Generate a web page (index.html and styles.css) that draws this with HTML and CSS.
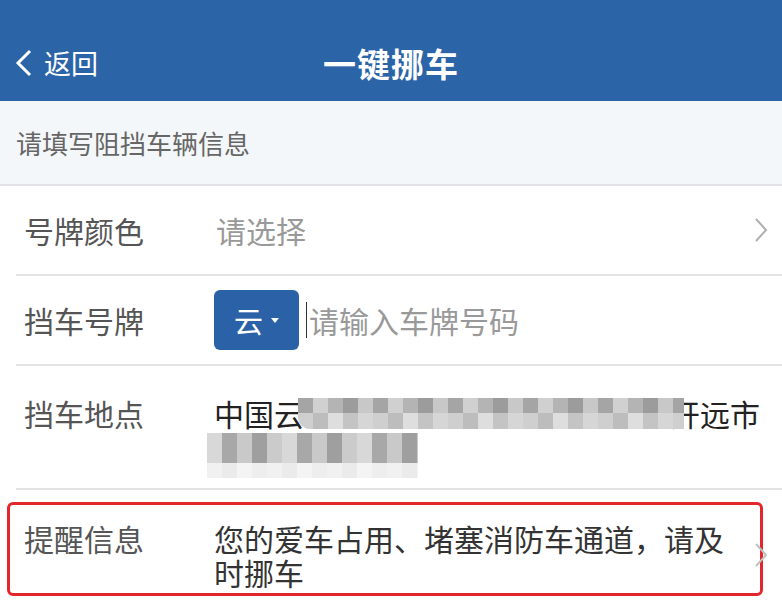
FILE: index.html
```html
<!DOCTYPE html>
<html lang="zh-CN">
<head>
	<meta charset="UTF-8">
	<meta name="viewport" content="width=device-width,initial-scale=1.0">
	<title>一键挪车</title>
	<link rel="stylesheet" href="styles.css">
</head>
<body>
	<!-- 顶部导航 -->
	<div class="header">
		<a class="back" href="##">
			<svg width="20" height="28" viewBox="0 0 20 28"><path d="M16 2 L4 14 L16 26" fill="none" stroke="#fff" stroke-width="3"/></svg>
			<span>返回</span>
		</a>
		<div class="title">一键挪车</div>
		<div class="side"></div>
	</div>
	<!-- 提示 -->
	<div class="tip">请填写阻挡车辆信息</div>
	<!-- 表单 -->
	<div class="list">
		<div class="row">
			<div class="label">号牌颜色</div>
			<div class="value muted">请选择</div>
			<svg class="more" width="14" height="26" viewBox="0 0 14 26"><path d="M2 2 L12 13 L2 24" fill="none" stroke="#b0b0b0" stroke-width="2"/></svg>
		</div>
		<div class="row">
			<div class="label">挡车号牌</div>
			<div class="value plate">
				<span class="prov">云<i class="tri"></i></span>
				<span class="cursor"></span>
				<span class="muted">请输入车牌号码</span>
			</div>
		</div>
		<div class="row top">
			<div class="label">挡车地点</div>
			<div class="value addr">
				<div class="line">中国云<span class="mosaic m1"></span>开远市</div>
				<div class="mosaic m2"></div>
			</div>
		</div>
	</div>
	<!-- 提醒信息 -->
	<div class="mark">
		<div class="row top last">
			<div class="label">提醒信息</div>
			<div class="value note">您的爱车占用、堵塞消防车通道，请及时挪车</div>
			<svg class="more edge" width="14" height="26" viewBox="0 0 14 26"><path d="M2 2 L12 13 L2 24" fill="none" stroke="#c0c0c0" stroke-width="2"/></svg>
		</div>
	</div>
</body>
</html>
```

FILE: styles.css
```css
*{
	margin: 0;
	padding: 0;
	box-sizing: border-box;
}
body{
	width: 782px;
	background: #fff;
	font-family: "Noto Sans CJK SC", "Noto Sans", sans-serif;
	color: #333;
	overflow: hidden;
}
a{
	text-decoration: none;
	color: #fff;
}
/*顶部蓝色导航*/
.header{
	height: 101px;
	padding-top: 24px;
	background: #2c64a8;
	display: grid;
	grid-template-columns: 1fr auto 1fr;
	align-items: center;
}
.back{
	display: flex;
	align-items: center;
	gap: 10px;
	padding-left: 14px;
	font-size: 27px;
	line-height: 36px;
}
.title{
	color: #fff;
	font-size: 33px;
	font-weight: bold;
	line-height: 40px;
	letter-spacing: 1px;
}
/*提示条*/
.tip{
	height: 85px;
	padding-left: 16px;
	display: flex;
	align-items: center;
	background: #f4f7f9;
	border-bottom: 2px solid #e2e4e7;
	color: #666;
	font-size: 26px;
}
/*表单行*/
.list{
	padding-left: 16px;
}
.row{
	display: flex;
	align-items: center;
	min-height: 90px;
	border-bottom: 2px solid #e3e3e3;
	font-size: 30px;
	line-height: 36px;
}
.row.top{
	align-items: flex-start;
	padding-top: 29px;
	padding-bottom: 10px;
}
.label{
	width: 200px;
	padding-left: 8px;
	color: #555;
	flex: none;
}
.value{
	flex: 1;
}
.muted{
	color: #999;
}
.more{
	margin-right: 14px;
	flex: none;
}
/*车牌省份*/
.plate{
	display: flex;
	align-items: center;
}
.prov{
	width: 85px;
	height: 60px;
	border-radius: 6px;
	background: #2b61a6;
	color: #fff;
	font-size: 29px;
	display: flex;
	align-items: center;
	justify-content: center;
	gap: 8px;
	margin-left: -2px;
}
.tri{
	width: 0;
	height: 0;
	border-left: 4px solid transparent;
	border-right: 4px solid transparent;
	border-top: 5px solid #fff;
}
.cursor{
	width: 1px;
	height: 36px;
	background: #333;
	margin: 0 2px 0 7px;
}
/*地址(打码)*/
.addr{
	color: #222;
}
.line{
	white-space: nowrap;
	margin-left: -2px;
}
.mosaic{
	background-color: #e6e6e6;
}
.m1{
	display: inline-block;
	vertical-align: top;
	position: relative;
	z-index: 1;
	width: 386px;
	height: 31px;
	margin: 3px -14px 0 -6px;
	border-radius: 0 0 0 12px;
	background-image:
		repeating-linear-gradient(90deg, #a5a5a5 0 15px, #d0d0d0 15px 30px, #b4b4b4 30px 45px, #9c9c9c 45px 60px, #c8c8c8 60px 75px),
		repeating-linear-gradient(90deg, #cfcfcf 0 15px, #bdbdbd 15px 30px, #dedede 30px 45px, #c4c4c4 45px 60px, #d6d6d6 60px 75px);
	background-size: 100% 15px, 100% 16px;
	background-position: 0 0, 0 15px;
	background-repeat: no-repeat;
}
.m2{
	width: 211px;
	height: 45px;
	margin: 2px 0 0 -9px;
	background-image:
		repeating-linear-gradient(90deg, #d8d8d8 0 15px, #a8a8a8 15px 30px, #c9c9c9 30px 45px, #9f9f9f 45px 60px, #cbcbcb 60px 75px),
		repeating-linear-gradient(90deg, #f1f1f1 0 15px, #ebebeb 15px 30px, #f4f4f4 30px 45px, #eeeeee 45px 60px);
	background-size: 100% 30px, 100% 15px;
	background-position: 0 0, 0 30px;
	background-repeat: no-repeat;
	background-color: #f2f2f2;
}
/*红框标注*/
.mark{
	margin: 12px 19px 0 7px;
	border: 3px solid #e3262b;
	border-radius: 6px;
}
.row.last{
	border-bottom: none;
	min-height: 85px;
	padding-top: 16px;
	padding-bottom: 4px;
	line-height: 34px;
}
.mark .label{
	width: 206px;
	padding-left: 14px;
}
.note{
	padding-right: 14px;
	margin-left: -2px;
}
.edge{
	align-self: center;
	margin-right: -8px;
}
```
